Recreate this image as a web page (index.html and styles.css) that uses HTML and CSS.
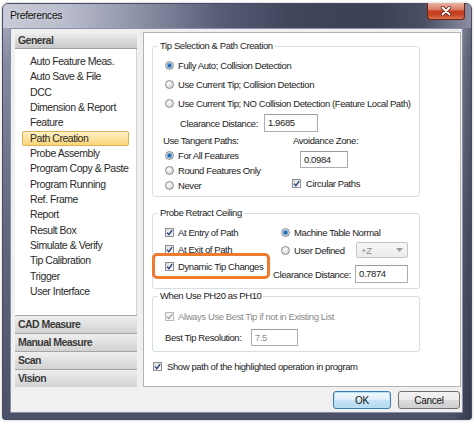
FILE: index.html
```html
<!DOCTYPE html>
<html lang="en">
<head>
<meta charset="utf-8">
<title>Preferences</title>
<link rel="stylesheet" href="styles.css">
</head>
<body>
<div class="window">
  <div class="titlebar">
    <span class="title">Preferences</span>
    <button class="close" aria-label="Close">
      <svg width="14" height="10" viewBox="0 0 14 10"><path d="M3.5 1.5 L10.5 8.5 M10.5 1.5 L3.5 8.5" stroke="#5b1c12" stroke-width="3.4" stroke-linecap="round"/><path d="M3.5 1.5 L10.5 8.5 M10.5 1.5 L3.5 8.5" stroke="#fff" stroke-width="2" stroke-linecap="round"/></svg>
    </button>
  </div>

  <div class="client">
    <div class="main">
      <nav class="sidebar">
        <div class="cat cat-top">General</div>
        <ul class="items">
          <li>Auto Feature Meas.</li>
          <li>Auto Save &amp; File</li>
          <li>DCC</li>
          <li>Dimension &amp; Report</li>
          <li>Feature</li>
          <li class="selected">Path Creation</li>
          <li>Probe Assembly</li>
          <li>Program Copy &amp; Paste</li>
          <li>Program Running</li>
          <li>Ref. Frame</li>
          <li>Report</li>
          <li>Result Box</li>
          <li>Simulate &amp; Verify</li>
          <li>Tip Calibration</li>
          <li>Trigger</li>
          <li>User Interface</li>
        </ul>
        <div class="cat">CAD Measure</div>
        <div class="cat">Manual Measure</div>
        <div class="cat">Scan</div>
        <div class="cat">Vision</div>
      </nav>

      <section class="page">
        <fieldset class="group g-tip">
          <legend>Tip Selection &amp; Path Creation</legend>
          <label class="opt r19"><span class="radio on"></span>Fully Auto; Collision Detection</label>
          <label class="opt r19"><span class="radio"></span>Use Current Tip; Collision Detection</label>
          <label class="opt r19"><span class="radio"></span>Use Current Tip; NO Collision Detection (Feature Local Path)</label>
          <div class="clearance">
            <span class="clearance-label">Clearance Distance:</span>
            <span class="input w54">1.9685</span>
          </div>
          <div class="tangent">
            <div class="tangent-left">
              <div class="lbl lbl-shift">Use Tangent Paths:</div>
              <label class="opt r15"><span class="radio on"></span>For All Features</label>
              <label class="opt r15"><span class="radio"></span>Round Features Only</label>
              <label class="opt r15"><span class="radio"></span>Never</label>
            </div>
            <div class="tangent-right">
              <div class="lbl">Avoidance Zone:</div>
              <span class="input avoid">0.0984</span>
              <label class="opt circular"><span class="check"><svg viewBox="0 0 7 7"><path d="M1 3.6 L2.9 5.7 L6.2 1.2"/></svg></span>Circular Paths</label>
            </div>
          </div>
        </fieldset>

        <fieldset class="group g-retract">
          <legend>Probe Retract Ceiling</legend>
          <div class="retract">
            <div class="retract-left">
              <label class="opt r17"><span class="check"><svg viewBox="0 0 7 7"><path d="M1 3.6 L2.9 5.7 L6.2 1.2"/></svg></span>At Entry of Path</label>
              <label class="opt r17"><span class="check"><svg viewBox="0 0 7 7"><path d="M1 3.6 L2.9 5.7 L6.2 1.2"/></svg></span>At Exit of Path</label>
              <label class="opt r17 flagged"><span class="check"><svg viewBox="0 0 7 7"><path d="M1 3.6 L2.9 5.7 L6.2 1.2"/></svg></span>Dynamic Tip Changes</label>
            </div>
            <div class="retract-right">
              <label class="opt r16 indent"><span class="radio on"></span>Machine Table Normal</label>
              <div class="user-row">
                <label class="opt r16"><span class="radio"></span>User Defined</label>
                <span class="combo">+Z<svg class="combo-arrow" width="7" height="4" viewBox="0 0 7 4"><path d="M0 0 H7 L3.5 4 Z"/></svg></span>
              </div>
              <div class="ceiling-row">
                <span>Clearance Distance:</span>
                <span class="input w53">0.7874</span>
              </div>
            </div>
          </div>
        </fieldset>

        <fieldset class="group g-ph20">
          <legend>When Use PH20 as PH10</legend>
          <label class="opt r16 disabled"><span class="check"><svg viewBox="0 0 7 7"><path d="M1 3.6 L2.9 5.7 L6.2 1.2"/></svg></span>Always Use Best Tip if not in Existing List</label>
          <div class="resolution">
            <span class="resolution-label">Best Tip Resolution:</span>
            <span class="input w47 muted">7.5</span>
          </div>
        </fieldset>

        <label class="opt show-path"><span class="check"><svg viewBox="0 0 7 7"><path d="M1 3.6 L2.9 5.7 L6.2 1.2"/></svg></span>Show path of the highlighted operation in program</label>
      </section>
    </div>

    <div class="buttons">
      <button class="btn btn-default">OK</button>
      <button class="btn btn-cancel">Cancel</button>
    </div>
  </div>
</div>
</body>
</html>
```

FILE: styles.css
```css
* { box-sizing: border-box; }

html, body { margin: 0; }

body {
  width: 474px;
  height: 425px;
  overflow: hidden;
  background: #ffffff;
  font-family: "Liberation Sans", Arial, sans-serif;
  font-size: 9.5px;
  letter-spacing: -0.4px;
  color: #1c1c1c;
}

/* ---- window frame ---- */
.window {
  margin: 3px 0 0 2px;
  width: 470px;
  height: 417px;
  padding: 0 8px 6px 7px;
  border: 1px solid #474b60;
  border-radius: 6px 6px 3px 3px;
  background:
    linear-gradient(to right, rgba(30, 34, 52, 0) 0, rgba(30, 34, 52, 0) 96%, rgba(30, 34, 52, .45) 100%),
    linear-gradient(to bottom, #aeb1c2 0, #868aa0 60px, #63677f 220px, #4c5068 100%);
  display: flex;
  flex-direction: column;
  box-shadow: 0 0 3px rgba(0, 0, 0, .25);
}

.titlebar {
  height: 24px;
  margin: 0 -8px 0 -7px;
  padding-left: 7px;
  display: flex;
  align-items: flex-start;
  border-radius: 5px 5px 0 0;
  background: linear-gradient(to right, #c9cbd8 0%, #b8bbcb 14%, #8a8ea5 30%, #585d76 46%, #40455c 62%, #3b4057 80%, #4a4f66 90%, #8b8ea2 100%);
}

.title {
  margin-top: 5px;
  font-size: 10.5px;
  letter-spacing: -0.4px;
  line-height: 12px;
  color: #111;
  text-shadow: 0 0 5px rgba(255, 255, 255, .6);
}

.close {
  margin: -1px 6px 0 auto;
  width: 38px;
  height: 17px;
  padding: 0;
  border: 1px solid #6b2217;
  border-top: 0;
  border-radius: 0 0 4px 4px;
  background: linear-gradient(#eab2a3 0, #db7d66 40%, #c53d20 52%, #c84627 75%, #e0764f 100%);
  display: flex;
  align-items: center;
  justify-content: center;
}

/* ---- client area ---- */
.client {
  flex: 1;
  border: 1px solid #8a8ea2;
  background: #f0f0f0;
  padding: 3px 1px 3px 4px;
  display: flex;
  flex-direction: column;
}

.main {
  height: 355px;
  display: flex;
  gap: 6px;
}

/* ---- category sidebar ---- */
.sidebar {
  width: 122px;
  margin-top: 1px;
  display: flex;
  flex-direction: column;
  font-size: 10.5px;
  letter-spacing: -0.45px;
}

.cat {
  height: 18px;
  line-height: 17px;
  padding-left: 3px;
  font-weight: bold;
  letter-spacing: -0.55px;
  color: #3a3a3a;
  border-top: 1px solid #a6a6a6;
  background: linear-gradient(#efefef, #d2d2d2);
}

.cat-top {
  height: 16px;
  line-height: 15px;
  border-top: 0;
  border-bottom: 1px solid #9e9e9e;
  background: linear-gradient(#ececec, #c9c9c9);
}

.items {
  flex: 1;
  margin: 0;
  padding: 5px 0 0;
  list-style: none;
  background: #ffffff;
  border-right: 1px solid #d4d4d4;
}

.items li {
  height: 15.33px;
  line-height: 13.33px;
  margin: 0 7px;
  padding-left: 7px;
  border: 1px solid transparent;
  color: #2a2a2a;
  white-space: nowrap;
}

.items li.selected {
  background: linear-gradient(#fff2c6, #fad478);
  border-color: #e0b155;
  border-radius: 2px;
}

/* ---- settings page ---- */
.page {
  flex: 1;
  background: #ffffff;
  border: 1px solid #b3b3b3;
  padding: 7px 0 0 8px;
}

.group {
  width: 268px;
  min-width: 0;
  margin: 0;
  padding: 0 0 0 12px;
  border: 1px solid #d5dfe5;
  border-radius: 3px;
}

.group legend {
  padding: 0 2px;
  margin-left: -7px;
  line-height: 12px;
}

.opt {
  display: flex;
  align-items: center;
  gap: 4px;
  white-space: nowrap;
}

.r19 { height: 19px; }
.r17 { height: 17px; }
.r16 { height: 16px; }
.r15 { height: 15px; }

.radio {
  flex: none;
  width: 9px;
  height: 9px;
  border: 1px solid #8c8c8c;
  border-radius: 50%;
  background: radial-gradient(circle at 40% 35%, #ffffff 0, #e6e6e6 45%, #c9c9c9 100%);
}

.radio.on {
  background:
    radial-gradient(circle, #1d4f8e 0, #3a7cc4 1.6px, #8fc0ec 2.6px, rgba(143, 192, 236, 0) 3.2px),
    radial-gradient(circle at 40% 35%, #ffffff 0, #e6e6e6 45%, #c9c9c9 100%);
}

.check {
  flex: none;
  width: 9px;
  height: 9px;
  border: 1px solid #8e8f8f;
  background: linear-gradient(135deg, #dcdcdc, #fbfbfb);
  display: flex;
  align-items: center;
  justify-content: center;
}

.check svg {
  width: 7px;
  height: 7px;
}

.check path {
  fill: none;
  stroke: #23407e;
  stroke-width: 1.4;
}

.input {
  display: inline-block;
  height: 17px;
  line-height: 15px;
  padding: 0 3px;
  border: 1px solid #abadb3;
  border-top-color: #9a9ca2;
  background: #ffffff;
  color: #1c1c1c;
}

.w54 { width: 54px; height: 18px; line-height: 16px; }
.w53 { width: 53px; height: 18px; line-height: 16px; }
.w47 { width: 47px; }

.muted { color: #8b8b8b; }

/* tip selection group */
.g-tip {
  padding-top: 4px;
  padding-bottom: 3px;
}

.clearance {
  height: 20px;
  display: flex;
  align-items: center;
  padding-left: 15px;
}

.clearance-label { width: 84px; }

.tangent { display: flex; }

.tangent-left { width: 128px; }

.lbl { height: 15px; line-height: 15px; }
.lbl-shift { margin-left: -2px; }

.tangent-right {
  display: flex;
  flex-direction: column;
  align-items: flex-start;
}

.avoid {
  width: 48px;
  margin: 3px 0 0 7px;
}

.circular {
  height: 14px;
  margin: 8px 0 0 -1px;
  gap: 5px;
}

/* probe retract group */
.g-retract {
  margin-top: 10px;
  padding-top: 5px;
  padding-bottom: 5px;
}

.retract { display: flex; }

.retract-left { width: 108px; }

.retract-right { width: 135px; }

.indent { padding-left: 8px; }

.user-row {
  height: 16px;
  margin-top: 2px;
  padding-left: 8px;
  display: flex;
  align-items: center;
  justify-content: space-between;
}

.combo {
  width: 52px;
  height: 16px;
  padding: 0 4px;
  border: 1px solid #c5c5c5;
  border-radius: 2px;
  background: linear-gradient(#f7f7f7, #ebebeb);
  color: #8e8e8e;
  display: flex;
  align-items: center;
  justify-content: space-between;
}

.combo-arrow path { fill: #9a9a9a; }

.ceiling-row {
  height: 18px;
  margin-top: 7px;
  display: flex;
  align-items: center;
  justify-content: space-between;
}

/* orange call-out drawn around the tip-change option */
.flagged { position: relative; }

.flagged::after {
  content: "";
  position: absolute;
  top: -5px;
  right: 3px;
  bottom: -4px;
  left: -13px;
  border: 3px solid #ee7b30;
  border-radius: 5px;
}

/* PH20 group */
.g-ph20 {
  margin-top: 1px;
  padding-top: 6px;
  padding-bottom: 5px;
}

.disabled { color: #8a8a8a; }

.disabled .check {
  border-color: #b9b9b9;
  background: linear-gradient(135deg, #ececec, #fbfbfb);
}

.disabled .check path { stroke: #a3a3a3; }

.resolution {
  height: 17px;
  margin-top: 5px;
  display: flex;
  align-items: center;
}

.resolution-label { width: 86px; }

.show-path {
  height: 14px;
  margin: 7px 0 0 1px;
  gap: 5px;
}

/* ---- dialog buttons ---- */
.buttons {
  height: 18px;
  margin-top: 4px;
  padding-right: 1px;
  display: flex;
  justify-content: flex-end;
  gap: 7px;
}

.btn {
  height: 18px;
  padding: 0;
  font: inherit;
  font-size: 10px;
  letter-spacing: -0.3px;
  color: #111;
  border: 1px solid #707070;
  border-radius: 3px;
  background: linear-gradient(#f3f3f3 0, #ebebeb 48%, #dcdcdc 52%, #cfcfcf 100%);
}

.btn-default {
  width: 58px;
  border-color: #3d7bad;
  box-shadow: inset 0 0 0 1px #b9e2f7;
  background: linear-gradient(#eef7fc 0, #dff0fa 48%, #c7e5f6 52%, #b3d9ee 100%);
}

.btn-cancel { width: 62px; }
```
